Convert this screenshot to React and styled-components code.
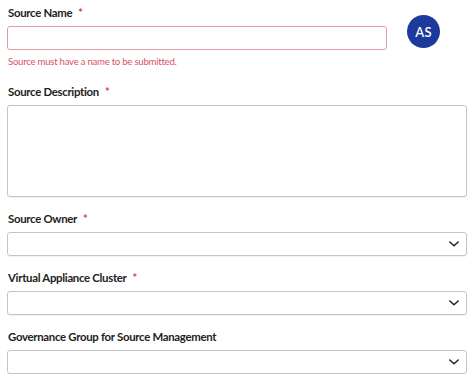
import React from "react";
import styled, { createGlobalStyle } from "styled-components";

const Global = createGlobalStyle`
  html, body { margin: 0; padding: 0; background: #fff; }
  body { font-family: "Lato", "Open Sans", sans-serif; color: #1f1f1f; }
  * { box-sizing: border-box; }
`;

const Page = styled.div`
  width: 474px;
  padding: 5px 7px 0 7px;
  display: flex;
  flex-direction: column;
  gap: 14px;
`;

const TopRow = styled.div`
  display: flex;
  align-items: flex-start;
`;

const Field = styled.div`
  display: flex;
  flex-direction: column;
  width: ${(p) => p.$width || "100%"};
`;

const Label = styled.label`
  font-size: 11.4px;
  font-weight: 700;
  line-height: 16px;
  height: 16px;
  margin: 0 0 5px 1px;
  color: #222;
  letter-spacing: -0.3px;
`;

const Req = styled.span`
  color: #d6405c;
  margin-left: 6px;
  font-weight: 700;
  font-size: 11px;
`;

const Input = styled.input`
  height: 24px;
  width: 100%;
  border: 1px solid ${(p) => (p.$invalid ? "#e79aa6" : "#c4c4c4")};
  border-radius: 3px;
  outline: none;
  padding: 0 8px;
  font: inherit;
  background: #fff;
`;

const TextArea = styled.textarea`
  height: 92px;
  width: 100%;
  border: 1px solid #c4c4c4;
  border-radius: 3px;
  resize: none;
  outline: none;
  font: inherit;
  display: block;
  box-shadow: 0 1px 1px rgba(0, 0, 0, 0.06);
`;

const Error = styled.div`
  margin-top: 5px;
  font-size: 9.6px;
  line-height: 14px;
  letter-spacing: -0.25px;
  color: #d9506a;
  margin-left: 1px;
  margin-bottom: 1px;
`;

const SelectBox = styled.div`
  height: 24px;
  width: 100%;
  border: 1px solid #c4c4c4;
  border-radius: 3px;
  display: flex;
  align-items: center;
  justify-content: flex-end;
  padding-right: 6px;
  box-shadow: 0 1px 1px rgba(0, 0, 0, 0.06);
`;

const AvatarWrap = styled.div`
  margin-left: 20px;
  margin-top: 10px;
`;

const Avatar = styled.div`
  width: 33px;
  height: 33px;
  border-radius: 50%;
  background: #1c3a9c;
  color: #fff;
  display: flex;
  align-items: center;
  justify-content: center;
  font-size: 13px;
  font-weight: 600;
  letter-spacing: 0.2px;
`;

const Chevron = () => (
  <svg width="12" height="8" viewBox="0 0 12 8" fill="none">
    <path d="M1.8 2 L6 5.8 L10.2 2" stroke="#222" strokeWidth="1.5" strokeLinecap="round" strokeLinejoin="round" />
  </svg>
);

const Select = () => (
  <SelectBox>
    <Chevron />
  </SelectBox>
);

export default function App() {
  return (
    <>
      <Global />
      <Page>
        <TopRow>
          <Field $width="380px">
            <Label>
              Source Name<Req>*</Req>
            </Label>
            <Input $invalid />
            <Error>Source must have a name to be submitted.</Error>
          </Field>
          <AvatarWrap>
            <Avatar>AS</Avatar>
          </AvatarWrap>
        </TopRow>
        <Field>
          <Label>
            Source Description<Req>*</Req>
          </Label>
          <TextArea />
        </Field>
        <Field>
          <Label>
            Source Owner<Req>*</Req>
          </Label>
          <Select />
        </Field>
        <Field>
          <Label>
            Virtual Appliance Cluster<Req>*</Req>
          </Label>
          <Select />
        </Field>
        <Field>
          <Label>Governance Group for Source Management</Label>
          <Select />
        </Field>
      </Page>
    </>
  );
}
